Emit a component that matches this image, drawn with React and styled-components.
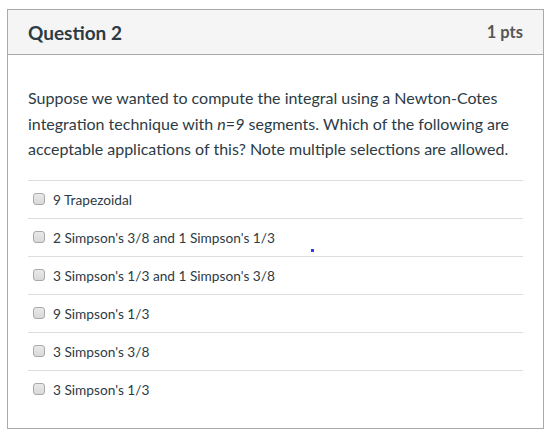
import React from 'react';
import styled, { createGlobalStyle } from 'styled-components';

const Global = createGlobalStyle`
  body {
    margin: 0;
    background: #fff;
    font-family: Lato, "Liberation Sans", sans-serif;
    color: #2d3b45;
  }
`;

const Page = styled.div`
  position: relative;
  padding: 9px 0 0 7px;
  width: 553px;
  height: 446px;
  box-sizing: border-box;
`;

const Card = styled.div`
  width: 537px;
  border: 1px solid #aaa;
  box-sizing: border-box;
`;

const Header = styled.div`
  display: flex;
  justify-content: space-between;
  align-items: center;
  height: 44px;
  padding: 0 20px;
  background: #f5f5f5;
  border-bottom: 1px solid #aaa;
`;

const Title = styled.div`
  font-size: 19px;
  font-weight: 700;
  color: #2d3b45;
`;

const Points = styled.div`
  font-size: 16.5px;
  font-weight: 700;
  color: #555;
`;

const Body = styled.div`
  padding: 30px 20px 20px;
`;

const Text = styled.p`
  margin: 0 0 18px;
  font-size: 16px;
  line-height: 25.6px;
  color: #2d3b45;
  em {
    font-style: italic;
  }
`;

const Answer = styled.label`
  display: flex;
  align-items: center;
  height: 37px;
  border-top: 1px solid #ddd;
  padding-left: 5px;
  font-size: 13.7px;
  color: #2d3b45;
`;

const Box = styled.span`
  width: 10px;
  height: 10px;
  margin-right: 8px;
  border: 1px solid #a9a9a9;
  border-radius: 3px;
  background: linear-gradient(#e9e9e9, #d9d9d9);
`;

const Dot = styled.span`
  position: absolute;
  left: 311px;
  top: 249px;
  width: 3px;
  height: 3px;
  background: #2f3bff;
`;

const answers = [
  '9 Trapezoidal',
  "2 Simpson's 3/8 and 1 Simpson's 1/3",
  "3 Simpson's 1/3 and 1 Simpson's 3/8",
  "9 Simpson's 1/3",
  "3 Simpson's 3/8",
  "3 Simpson's 1/3",
];

const App = () => {
  return (
    <Page>
      <Global />
      <Card>
        <Header>
          <Title>Question 2</Title>
          <Points>1 pts</Points>
        </Header>
        <Body>
          <Text>
            Suppose we wanted to compute the integral using a Newton-Cotes
            integration technique with <em>n</em>=<em>9</em> segments. Which of
            the following are acceptable applications of this? Note multiple
            selections are allowed.
          </Text>
          {answers.map((a) => (
            <Answer key={a}>
              <Box />
              {a}
            </Answer>
          ))}
        </Body>
      </Card>
      <Dot />
    </Page>
  );
};

export default App;
